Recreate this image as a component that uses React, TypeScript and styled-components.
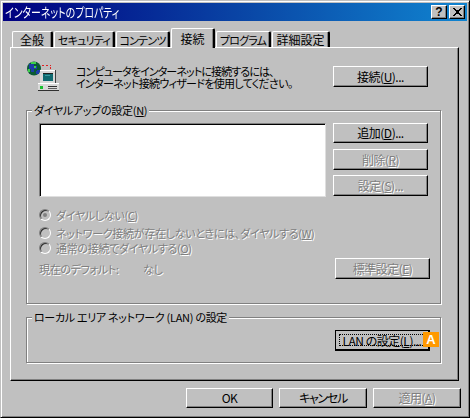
import React from 'react'
import styled, { createGlobalStyle } from 'styled-components'

const GlobalStyle = createGlobalStyle`
  html, body {
    margin: 0;
    padding: 0;
    background: #c0c0c0;
  }
  body {
    font-family: "Noto Sans CJK JP", "Liberation Sans", sans-serif;
    font-size: 12px;
    font-feature-settings: "palt";
    color: #000;
  }
`

const tabs = [
  { label: '全般', width: 41 },
  { label: 'セキュリティ', width: 61, kana: true },
  { label: 'コンテンツ', width: 54, kana: true },
  { label: '接続', width: 44, active: true },
  { label: 'プログラム', width: 55, kana: true },
  { label: '詳細設定', width: 58 },
]

const ConnectionIcon: React.FC = () => (
  <svg width="34" height="32" viewBox="0 0 34 32" shapeRendering="crispEdges">
    <circle cx="8" cy="8.5" r="7" fill="#0a5a34" shapeRendering="auto" />
    <path d="M3 4h5v2h3v3H8v3H5V9H3z M11 10h3v2h-1v2h-3v-3h1z" fill="#1c3ca8" />
    <path d="M5 2h5v2H5z M2 9h2v3H2z M8 6h2v2H8z" fill="#3ccf4a" />
    <path d="M16 5h2v1h-2z M20 5h2v1h-2z M24 5h1v1h-1z M24 7h1v2h-1z" fill="#e02020" />
    <rect x="14" y="10" width="16" height="13" fill="#d8d8d8" />
    <rect x="14" y="10" width="16" height="1" fill="#ffffff" />
    <rect x="29" y="10" width="1" height="13" fill="#404040" />
    <rect x="17" y="13" width="10" height="8" fill="#0f6a70" />
    <rect x="17" y="13" width="10" height="1" fill="#202020" />
    <rect x="19" y="15" width="5" height="1" fill="#3a9aa0" />
    <rect x="12" y="23" width="21" height="8" fill="#d8d8d8" />
    <rect x="12" y="30" width="21" height="1" fill="#303030" />
    <rect x="12" y="23" width="21" height="1" fill="#ffffff" />
    <rect x="14" y="26" width="3" height="3" fill="#18c030" />
    <rect x="22" y="26" width="9" height="1" fill="#303030" />
    <rect x="22" y="28" width="9" height="1" fill="#606060" />
  </svg>
)

const App: React.FC = () => {
  return (
    <Window>
      <GlobalStyle />
      <TitleBar>
        <TitleSlot><Title>インターネットのプロパティ</Title></TitleSlot>
        <TitleButton>?</TitleButton>
        <CloseButton>
          <svg width="9" height="8" viewBox="0 0 9 8" shapeRendering="crispEdges">
            <path d="M0 0h2v1h1v1h3V1h1V0h2v1H8v1H7v1H6v2h1v1h1v1h1v1H7V7H6V6H3v1H2v1H0V7h1V6h1V5h1V3H2V2H1V1H0z" fill="#000" />
          </svg>
        </CloseButton>
      </TitleBar>

      <TabRow>
        {tabs.map((t) => (
          <Tab key={t.label} $active={t.active} $width={t.width} $kana={t.kana}>{t.label}</Tab>
        ))}
      </TabRow>

      <Panel>
        <Intro>
          <IconSlot><ConnectionIcon /></IconSlot>
          <IntroText>
            <IntroLine $spacing={-0.9}>コンピュータをインターネットに接続するには、</IntroLine>
            <IntroLine $spacing={-0.7}>インターネット接続ウィザードを使用してください。</IntroLine>
          </IntroText>
          <Button $w={95} $h={21}>接続(<Key>U</Key>)...</Button>
        </Intro>

        <DialGroup>
          <Legend>ダイヤルアップの設定(<Key>N</Key>)</Legend>
          <ListRow>
            <ListBox />
            <ButtonColumn>
              <Button $w={95} $h={20}>追加(<Key>D</Key>)...</Button>
              <Button $w={95} $h={21} disabled>削除(<Key>R</Key>)</Button>
              <Button $w={95} $h={21} disabled>設定(<Key>S</Key>)...</Button>
            </ButtonColumn>
          </ListRow>
          <Options>
            <OptionRow $gap={3}>
              <Radio $checked />
              <Disabled>ダイヤルしない(<Key>C</Key>)</Disabled>
            </OptionRow>
            <OptionRow>
              <Radio />
              <Disabled>ネットワーク接続が存在しないときには、ダイヤルする(<Key>W</Key>)</Disabled>
            </OptionRow>
            <OptionRow>
              <Radio />
              <Disabled>通常の接続でダイヤルする(<Key>O</Key>)</Disabled>
            </OptionRow>
          </Options>
          <DefaultRow>
            <DefaultLabel>現在のデフォルト:</DefaultLabel>
            <Disabled>なし</Disabled>
            <Button $w={95} $h={21} disabled>標準設定(<Key>E</Key>)</Button>
          </DefaultRow>
        </DialGroup>

        <LanGroup>
          <Legend>ローカル エリア ネットワーク (LAN) の設定</Legend>
          <LanButtonWrap>
            <FocusButton>
              <FocusInner>LAN の設定(<Key>L</Key>)...</FocusInner>
            </FocusButton>
            <Badge>A</Badge>
          </LanButtonWrap>
        </LanGroup>
      </Panel>

      <Footer>
        <Button $w={87} $h={20}>OK</Button>
        <Button $w={88} $h={20} $tight>キャンセル</Button>
        <Button $w={88} $h={20} disabled>適用(<Key>A</Key>)</Button>
      </Footer>
    </Window>
  )
}

const Window = styled.div`
  box-sizing: border-box;
  width: 470px;
  height: 418px;
  padding: 2px;
  background: #c0c0c0;
  border-top: 1px solid #c0c0c0;
  border-left: 1px solid #c0c0c0;
  border-right: 1px solid #000;
  border-bottom: 1px solid #000;
  box-shadow: inset 1px 1px 0 #fff, inset -1px -1px 0 #808080;
  overflow: hidden;
`

const TitleBar = styled.div`
  display: flex;
  align-items: center;
  height: 18px;
  padding: 0 2px 0 2px;
  background: linear-gradient(90deg, #000080 0%, #0a4aa8 55%, #1084d0 100%);
`

const TitleSlot = styled.div`
  flex: 1;
  min-width: 0;
  line-height: 16px;
`

const Title = styled.div`
  display: inline-block;
  color: #fff;
  font-size: 13px;
  line-height: 16px;
  white-space: nowrap;
  transform: scaleX(0.76);
  transform-origin: left center;
`

const TitleButton = styled.div`
  box-sizing: border-box;
  width: 16px;
  height: 14px;
  display: flex;
  align-items: center;
  justify-content: center;
  background: #c0c0c0;
  font-family: "Liberation Sans", sans-serif;
  font-weight: bold;
  font-size: 12px;
  border-top: 1px solid #fff;
  border-left: 1px solid #fff;
  border-right: 1px solid #000;
  border-bottom: 1px solid #000;
  box-shadow: inset -1px -1px 0 #808080;
`

const CloseButton = styled(TitleButton)`
  margin-left: 2px;
`

const TabRow = styled.div`
  display: flex;
  align-items: flex-end;
  height: 26px;
  padding-left: 9px;
  gap: 1px;
  position: relative;
  z-index: 1;
`

const Tab = styled.div<{ $active?: boolean; $width: number; $kana?: boolean }>`
  box-sizing: border-box;
  width: ${(p) => p.$width}px;
  height: ${(p) => (p.$active ? 20 : 16)}px;
  margin-bottom: ${(p) => (p.$active ? -1 : 0)}px;
  display: flex;
  align-items: center;
  justify-content: center;
  background: #c0c0c0;
  font-size: ${(p) => (p.$kana ? 11 : 12)}px;
  letter-spacing: ${(p) => (p.$kana ? -0.8 : 0)}px;
  line-height: 14px;
  white-space: nowrap;
  border-top: 1px solid #fff;
  border-left: 1px solid #fff;
  border-right: 2px solid #000;
  border-radius: 2px 2px 0 0;
  box-shadow: inset -1px 0 0 #808080;
`

const Panel = styled.div`
  box-sizing: border-box;
  width: 449px;
  height: 334px;
  margin-left: 7px;
  padding: 12px 0 0 15px;
  border-top: 1px solid #fff;
  border-left: 1px solid #fff;
  border-right: 1px solid #000;
  border-bottom: 1px solid #000;
  box-shadow: inset -1px -1px 0 #808080;
`

const Intro = styled.div`
  display: flex;
  align-items: flex-start;
  width: 402px;
  height: 50px;
  button {
    margin-top: 6px;
  }
`

const IconSlot = styled.div`
  flex: none;
  width: 50px;
  height: 32px;
`

const IntroText = styled.div`
  flex: 1;
  margin-top: 5px;
  white-space: nowrap;
`

const IntroLine = styled.div<{ $spacing: number }>`
  font-size: 11px;
  line-height: 12px;
  letter-spacing: ${(p) => p.$spacing}px;
`

const Button = styled.button<{ $w?: number; $h?: number; $tight?: boolean }>`
  box-sizing: border-box;
  flex: none;
  width: ${(p) => p.$w ?? 95}px;
  height: ${(p) => p.$h ?? 21}px;
  padding: 0;
  background: #c0c0c0;
  font: inherit;
  font-feature-settings: inherit;
  letter-spacing: ${(p) => (p.$tight ? -1.3 : -0.5)}px;
  line-height: 1;
  color: #000;
  border-top: 1px solid #fff;
  border-left: 1px solid #fff;
  border-right: 1px solid #000;
  border-bottom: 1px solid #000;
  box-shadow: inset -1px -1px 0 #808080;
  &:disabled {
    color: #808080;
    text-shadow: 1px 1px 0 #fff;
  }
`

const Key = styled.span`
  text-decoration: underline;
`

const Group = styled.div`
  box-sizing: border-box;
  position: relative;
  width: 415px;
  border: 1px solid #808080;
  box-shadow: 1px 1px 0 #fff, inset 1px 1px 0 #fff;
`

const DialGroup = styled(Group)`
  height: 194px;
  padding: 12px 12px 0 12px;
`

const LanGroup = styled(Group)`
  height: 46px;
  margin-top: 13px;
  padding: 12px 10px 0 0;
`

const Legend = styled.div`
  position: absolute;
  top: -9px;
  left: 5px;
  padding: 0 2px;
  background: #c0c0c0;
  font-size: 11px;
  letter-spacing: -0.3px;
  line-height: 16px;
  white-space: nowrap;
`

const ListRow = styled.div`
  display: flex;
  justify-content: space-between;
`

const ListBox = styled.div`
  box-sizing: border-box;
  width: 287px;
  height: 74px;
  background: #fff;
  border-top: 1px solid #808080;
  border-left: 1px solid #808080;
  border-right: 1px solid #dfdfdf;
  border-bottom: 1px solid #dfdfdf;
  box-shadow: inset 1px 1px 0 #000;
`

const ButtonColumn = styled.div`
  display: flex;
  flex-direction: column;
  gap: 5px;
  button:nth-child(2) {
    margin-top: 1px;
  }
`

const Options = styled.div`
  margin-top: 10px;
  display: flex;
  flex-direction: column;
`

const OptionRow = styled.div<{ $gap?: number }>`
  display: flex;
  align-items: center;
  gap: 5px;
  height: 15px;
  margin-bottom: ${(p) => p.$gap ?? 0}px;
  white-space: nowrap;
`

const Radio = styled.span<{ $checked?: boolean }>`
  box-sizing: border-box;
  flex: none;
  width: 12px;
  height: 12px;
  display: flex;
  align-items: center;
  justify-content: center;
  border-radius: 50%;
  background: #c0c0c0;
  border: 1px solid;
  border-color: #808080 #fff #fff #808080;
  box-shadow: inset 1px 1px 0 #303030;
  &::after {
    content: '';
    width: 4px;
    height: 4px;
    border-radius: 50%;
    background: ${(p) => (p.$checked ? '#808080' : 'transparent')};
  }
`

const Disabled = styled.div`
  color: #808080;
  font-size: 11px;
  line-height: 14px;
  text-shadow: 1px 1px 0 #fff;
  letter-spacing: -0.3px;
`

const DefaultRow = styled.div`
  display: flex;
  align-items: center;
  margin-top: 3px;
  button {
    margin-left: auto;
    margin-right: -2px;
  }
`

const DefaultLabel = styled(Disabled)`
  width: 104px;
`

const LanButtonWrap = styled.div`
  position: relative;
  width: 95px;
  margin-left: auto;
`

const FocusButton = styled(Button)`
  display: block;
  width: 95px;
  height: 21px;
  padding: 3px;
  border: 1px solid #000;
  border-right-width: 2px;
  border-bottom-width: 2px;
  box-shadow: none;
`

const FocusInner = styled.span`
  display: block;
  height: 100%;
  line-height: 13px;
  outline: 1px dotted #000;
  outline-offset: -1px;
  white-space: nowrap;
`

const Badge = styled.span`
  position: absolute;
  top: 2px;
  right: -9px;
  width: 16px;
  height: 15px;
  display: flex;
  align-items: center;
  justify-content: center;
  background: #ff9900;
  color: #fff;
  font-family: "Liberation Sans", sans-serif;
  font-weight: bold;
  font-size: 13px;
`

const Footer = styled.div`
  display: flex;
  justify-content: flex-end;
  gap: 6px;
  margin-top: 7px;
  padding-right: 6px;
`

export default App
